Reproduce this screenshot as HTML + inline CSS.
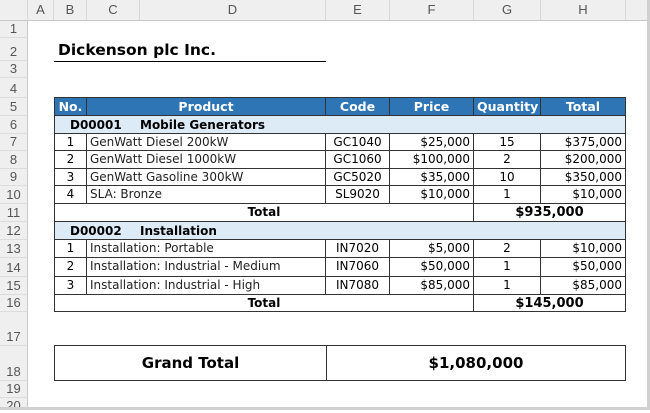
<!DOCTYPE html>
<html><head><meta charset="utf-8"><style>
*{margin:0;padding:0;box-sizing:border-box}
body{width:650px;height:410px;overflow:hidden;background:#fff;font-family:"DejaVu Sans","Liberation Sans",sans-serif;position:relative}
.a{position:absolute}
.ch{position:absolute;top:0;height:21px;background:#efefef;border-right:1px solid #d8d8d8;border-bottom:1px solid #c8c8c8;color:#555;font-size:13px;text-align:center;line-height:20px;font-family:"Liberation Sans",sans-serif}
.rh{position:absolute;left:0;width:28px;background:#efefef;border-right:1px solid #c8c8c8;border-bottom:1px solid #dcdcdc;color:#555;font-size:13px;text-align:center;font-family:"Liberation Sans",sans-serif;display:flex;align-items:flex-end;justify-content:center;padding-bottom:1px}
.c{position:absolute;font-size:12px;color:#000;white-space:nowrap;line-height:17px;border-right:1px solid #333;border-bottom:1px solid #333;padding:0 3px;overflow:hidden}
.hd{background:#2e75b6;color:#fff;font-weight:bold;text-align:center;font-size:12.5px}
.ce{text-align:center}.r{text-align:right}
.g{position:absolute;left:54px;width:572px;background:#ddebf7;border:1px solid #333;border-top:none;font-size:12px;font-weight:bold;line-height:18px}
.p{color:#222}
</style></head><body>
<div class="ch" style="left:0;width:28px"></div>
<div class="ch" style="left:28px;width:26px">A</div>
<div class="ch" style="left:54px;width:33px">B</div>
<div class="ch" style="left:87px;width:53px">C</div>
<div class="ch" style="left:140px;width:186px">D</div>
<div class="ch" style="left:326px;width:64px">E</div>
<div class="ch" style="left:390px;width:84px">F</div>
<div class="ch" style="left:474px;width:67px">G</div>
<div class="ch" style="left:541px;width:85px">H</div>
<div class="ch" style="left:626px;width:24px"></div>

<div class="rh" style="top:21px;height:17px">1</div>
<div class="rh" style="top:38px;height:23px">2</div>
<div class="rh" style="top:61px;height:17px">3</div>
<div class="rh" style="top:78px;height:20px">4</div>
<div class="rh" style="top:98px;height:18px">5</div>
<div class="rh" style="top:116px;height:18px">6</div>
<div class="rh" style="top:134px;height:17px">7</div>
<div class="rh" style="top:151px;height:18px">8</div>
<div class="rh" style="top:169px;height:17px">9</div>
<div class="rh" style="top:186px;height:18px">10</div>
<div class="rh" style="top:204px;height:18px">11</div>
<div class="rh" style="top:222px;height:18px">12</div>
<div class="rh" style="top:240px;height:18px">13</div>
<div class="rh" style="top:258px;height:19px">14</div>
<div class="rh" style="top:277px;height:18px">15</div>
<div class="rh" style="top:295px;height:17px">16</div>
<div class="rh" style="top:312px;height:34px">17</div>
<div class="rh" style="top:346px;height:35px">18</div>
<div class="rh" style="top:381px;height:17px">19</div>
<div class="rh" style="top:398px;height:12px;align-items:flex-start">20</div>
<div class="a" style="left:0;top:407px;width:650px;height:3px;background:#d0d0d0"></div>
<div class="a" style="left:647px;top:0;width:3px;height:410px;background:#d0d0d0"></div>

<div class="a" style="left:58px;top:41px;font-size:15.5px;font-weight:bold">Dickenson plc Inc.</div>
<div class="a" style="left:54px;top:61px;width:272px;height:1px;background:#000"></div>

<div class="a" style="left:54px;top:97px;width:572px;height:1px;background:#333"></div>
<div class="c hd" style="left:54px;top:98px;width:33px;height:18px;border-left:1px solid #333">No.</div>
<div class="c hd" style="left:87px;top:98px;width:239px;height:18px">Product</div>
<div class="c hd" style="left:326px;top:98px;width:64px;height:18px">Code</div>
<div class="c hd" style="left:390px;top:98px;width:84px;height:18px">Price</div>
<div class="c hd" style="left:474px;top:98px;width:67px;height:18px">Quantity</div>
<div class="c hd" style="left:541px;top:98px;width:85px;height:18px">Total</div>

<div class="g" style="top:116px;height:18px"><span class="a" style="left:15px">D00001</span><span class="a" style="left:85px">Mobile Generators</span></div>

<div class="c ce" style="left:54px;top:134px;width:33px;height:17px;border-left:1px solid #333">1</div>
<div class="c p" style="left:87px;top:134px;width:239px;height:17px">GenWatt Diesel 200kW</div>
<div class="c ce" style="left:326px;top:134px;width:64px;height:17px">GC1040</div>
<div class="c r" style="left:390px;top:134px;width:84px;height:17px">$25,000</div>
<div class="c ce" style="left:474px;top:134px;width:67px;height:17px">15</div>
<div class="c r" style="left:541px;top:134px;width:85px;height:17px">$375,000</div>

<div class="c ce" style="left:54px;top:151px;width:33px;height:18px;border-left:1px solid #333">2</div>
<div class="c p" style="left:87px;top:151px;width:239px;height:18px">GenWatt Diesel 1000kW</div>
<div class="c ce" style="left:326px;top:151px;width:64px;height:18px">GC1060</div>
<div class="c r" style="left:390px;top:151px;width:84px;height:18px">$100,000</div>
<div class="c ce" style="left:474px;top:151px;width:67px;height:18px">2</div>
<div class="c r" style="left:541px;top:151px;width:85px;height:18px">$200,000</div>

<div class="c ce" style="left:54px;top:169px;width:33px;height:17px;border-left:1px solid #333">3</div>
<div class="c p" style="left:87px;top:169px;width:239px;height:17px">GenWatt Gasoline 300kW</div>
<div class="c ce" style="left:326px;top:169px;width:64px;height:17px">GC5020</div>
<div class="c r" style="left:390px;top:169px;width:84px;height:17px">$35,000</div>
<div class="c ce" style="left:474px;top:169px;width:67px;height:17px">10</div>
<div class="c r" style="left:541px;top:169px;width:85px;height:17px">$350,000</div>

<div class="c ce" style="left:54px;top:186px;width:33px;height:18px;border-left:1px solid #333">4</div>
<div class="c p" style="left:87px;top:186px;width:239px;height:18px">SLA: Bronze</div>
<div class="c ce" style="left:326px;top:186px;width:64px;height:18px">SL9020</div>
<div class="c r" style="left:390px;top:186px;width:84px;height:18px">$10,000</div>
<div class="c ce" style="left:474px;top:186px;width:67px;height:18px">1</div>
<div class="c r" style="left:541px;top:186px;width:85px;height:18px">$10,000</div>

<div class="c ce" style="left:54px;top:204px;width:420px;height:18px;border-left:1px solid #333;font-weight:bold">Total</div>
<div class="c ce" style="left:474px;top:204px;width:152px;height:18px;font-weight:bold;font-size:13px">$935,000</div>

<div class="g" style="top:222px;height:18px"><span class="a" style="left:15px">D00002</span><span class="a" style="left:85px">Installation</span></div>

<div class="c ce" style="left:54px;top:240px;width:33px;height:18px;border-left:1px solid #333">1</div>
<div class="c p" style="left:87px;top:240px;width:239px;height:18px">Installation: Portable</div>
<div class="c ce" style="left:326px;top:240px;width:64px;height:18px">IN7020</div>
<div class="c r" style="left:390px;top:240px;width:84px;height:18px">$5,000</div>
<div class="c ce" style="left:474px;top:240px;width:67px;height:18px">2</div>
<div class="c r" style="left:541px;top:240px;width:85px;height:18px">$10,000</div>

<div class="c ce" style="left:54px;top:258px;width:33px;height:19px;border-left:1px solid #333">2</div>
<div class="c p" style="left:87px;top:258px;width:239px;height:19px">Installation: Industrial - Medium</div>
<div class="c ce" style="left:326px;top:258px;width:64px;height:19px">IN7060</div>
<div class="c r" style="left:390px;top:258px;width:84px;height:19px">$50,000</div>
<div class="c ce" style="left:474px;top:258px;width:67px;height:19px">1</div>
<div class="c r" style="left:541px;top:258px;width:85px;height:19px">$50,000</div>

<div class="c ce" style="left:54px;top:277px;width:33px;height:18px;border-left:1px solid #333">3</div>
<div class="c p" style="left:87px;top:277px;width:239px;height:18px">Installation: Industrial - High</div>
<div class="c ce" style="left:326px;top:277px;width:64px;height:18px">IN7080</div>
<div class="c r" style="left:390px;top:277px;width:84px;height:18px">$85,000</div>
<div class="c ce" style="left:474px;top:277px;width:67px;height:18px">1</div>
<div class="c r" style="left:541px;top:277px;width:85px;height:18px">$85,000</div>

<div class="c ce" style="left:54px;top:295px;width:420px;height:17px;border-left:1px solid #333;font-weight:bold">Total</div>
<div class="c ce" style="left:474px;top:295px;width:152px;height:17px;font-weight:bold;font-size:13px">$145,000</div>

<div class="c ce" style="left:54px;top:345px;width:272px;height:36px;border:1px solid #333;border-right:none;font-weight:bold;font-size:15px;line-height:34px">Grand Total</div>
<div class="c ce" style="left:326px;top:345px;width:300px;height:36px;border:1px solid #333;font-weight:bold;font-size:15px;line-height:34px">$1,080,000</div>
</body></html>
